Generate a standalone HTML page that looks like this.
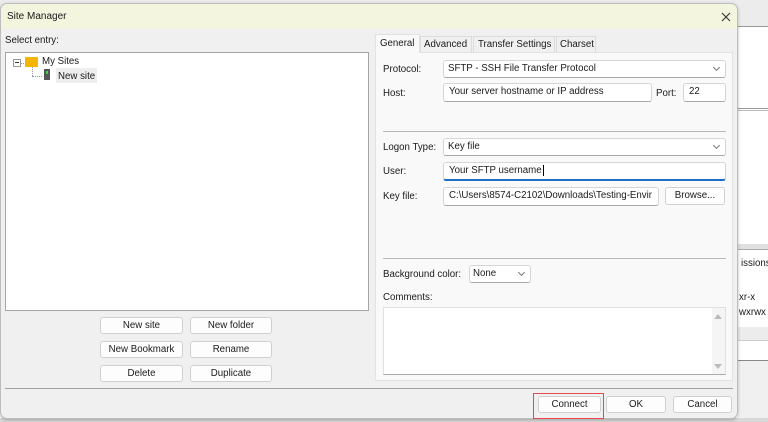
<!DOCTYPE html>
<html><head><meta charset="utf-8"><style>
*{box-sizing:border-box;margin:0;padding:0}
body{width:768px;height:422px;overflow:hidden;position:relative;background:#fff;font-family:"Liberation Sans",sans-serif;font-size:9.7px;color:#1a1a1a}
.a{position:absolute}
.btn{position:absolute;background:#fdfdfd;border:1px solid #d0d0d0;border-radius:3px;text-align:center;line-height:15px;font-size:9.7px}
.inp{position:absolute;background:#fff;border:1px solid #d6d6d6;border-bottom-color:#a8a8a8;border-radius:3px;padding-left:5px;line-height:16px;white-space:nowrap;overflow:hidden}
.sel::after{content:"";position:absolute;right:6px;top:4px;width:4px;height:4px;border-right:1px solid #777;border-bottom:1px solid #777;transform:rotate(45deg)}
.lbl{position:absolute;font-size:9.7px}
</style></head><body>
<div class="a" style="left:0;top:0;width:768px;height:26px;background:#ececec"></div>
<div class="a" style="left:738px;top:26px;width:30px;height:1px;background:#999"></div>
<div class="a" style="left:738px;top:108px;width:30px;height:3px;border-top:1px solid #999;border-bottom:1px solid #bbb"></div>
<div class="a" style="left:738px;top:244px;width:30px;height:6px;background:#e0e0e0;border-bottom:1px solid #aaa"></div>
<div class="a" style="left:741px;top:258px;font-size:9.7px">issions</div>
<div class="a" style="left:739px;top:292px;font-size:9.7px">xr-x</div>
<div class="a" style="left:739px;top:307px;font-size:9.7px">wxrwx</div>
<div class="a" style="left:738px;top:327px;width:30px;height:14px;background:#ececec;border-bottom:1px solid #ccc"></div>
<div class="a" style="left:738px;top:360px;width:30px;height:1px;background:#888"></div>
<div class="a" style="left:738px;top:361px;width:30px;height:61px;background:#f0f0f0"></div>
<div class="a" style="left:0;top:418px;width:768px;height:4px;background:#d8d8d8"></div>
<div class="a" style="left:0;top:3px;width:738px;height:416px;background:#f0f0f0;border:1px solid #bdbdbd;border-radius:7px;overflow:hidden;box-shadow:0 1px 3px rgba(0,0,0,.25)">
 <div class="a" style="left:0;top:0;width:738px;height:25px;background:#f3f5df"></div>
 <div class="a" style="left:6px;top:7px;font-size:10px">Site Manager</div>
 <svg class="a" style="left:720px;top:8px" width="10" height="10"><path d="M1 1L9 9M9 1L1 9" stroke="#333" stroke-width="1.1"/></svg>
</div>
<div class="lbl" style="left:5px;top:35px">Select entry:</div>
<div class="a" style="left:5px;top:52px;width:364px;height:259px;background:#fff;border:1px solid #a5a5a5"></div>
<div class="a" style="left:13px;top:59px;width:8px;height:8px;border:1px solid #999;background:#fff"></div>
<div class="a" style="left:15px;top:62px;width:4px;height:1px;background:#333"></div>
<div class="a" style="left:21px;top:63px;width:5px;border-top:1px dotted #999"></div>
<div class="a" style="left:25px;top:57px;width:13px;height:10px;background:#f5b400;border-radius:1px"></div>
<div class="a" style="left:42px;top:56px">My Sites</div>
<div class="a" style="left:32px;top:67px;height:9px;border-left:1px dotted #999"></div>
<div class="a" style="left:32px;top:76px;width:10px;border-top:1px dotted #999"></div>
<div class="a" style="left:44px;top:69px;width:6px;height:11px;background:#555"></div>
<div class="a" style="left:46px;top:71px;width:2px;height:3px;background:#4c4"></div>
<div class="a" style="left:56px;top:68px;width:41px;height:15px;background:#eee"></div>
<div class="a" style="left:58px;top:71px">New site</div>
<div class="btn" style="left:100px;top:317px;width:83px;height:17px">New site</div>
<div class="btn" style="left:190px;top:317px;width:82px;height:17px">New folder</div>
<div class="btn" style="left:100px;top:341px;width:83px;height:17px">New Bookmark</div>
<div class="btn" style="left:190px;top:341px;width:82px;height:17px">Rename</div>
<div class="btn" style="left:100px;top:365px;width:83px;height:17px">Delete</div>
<div class="btn" style="left:190px;top:365px;width:82px;height:17px">Duplicate</div>
<div class="a" style="left:375px;top:52px;width:358px;height:329px;background:#f9f9f9;border:1px solid #e2e2e2"></div>
<div class="a" style="left:375px;top:34px;width:45px;height:19px;background:#f9f9f9;border:1px solid #e2e2e2;border-bottom:none"></div>
<div class="a" style="left:380px;top:38px">General</div>
<div class="a" style="left:420px;top:36px;width:52px;height:16px;border:1px solid #dcdcdc;border-bottom:none;background:#f0f0f0"></div>
<div class="a" style="left:424px;top:39px">Advanced</div>
<div class="a" style="left:473px;top:36px;width:82px;height:16px;border:1px solid #dcdcdc;border-bottom:none"></div>
<div class="a" style="left:478px;top:39px">Transfer Settings</div>
<div class="a" style="left:556px;top:36px;width:40px;height:16px;border:1px solid #dcdcdc;border-bottom:none"></div>
<div class="a" style="left:560px;top:39px">Charset</div>
<div class="lbl" style="left:383px;top:64px">Protocol:</div>
<div class="inp sel" style="left:443px;top:60px;width:283px;height:18px;padding-left:4px">SFTP - SSH File Transfer Protocol</div>
<div class="lbl" style="left:383px;top:88px">Host:</div>
<div class="inp" style="left:443px;top:83px;width:209px;height:19px">Your server hostname or IP address</div>
<div class="lbl" style="left:656px;top:88px">Port:</div>
<div class="inp" style="left:683px;top:83px;width:43px;height:19px">22</div>
<div class="a" style="left:383px;top:131px;width:343px;height:1px;background:#b8b8b8"></div>
<div class="lbl" style="left:383px;top:142px">Logon Type:</div>
<div class="inp sel" style="left:443px;top:138px;width:283px;height:18px;padding-left:4px">Key file</div>
<div class="lbl" style="left:383px;top:166px">User:</div>
<div class="inp" style="left:443px;top:162px;width:283px;height:19px;border-bottom:2px solid #1a6fc4">Your SFTP username<span style="border-left:1px solid #000;margin-left:1px"></span></div>
<div class="lbl" style="left:383px;top:191px">Key file:</div>
<div class="inp" style="left:443px;top:187px;width:216px;height:19px">C:\Users\8574-C2102\Downloads\Testing-Envir</div>
<div class="btn" style="left:665px;top:187px;width:60px;height:18px;line-height:16px">Browse...</div>
<div class="a" style="left:383px;top:258px;width:343px;height:1px;background:#b8b8b8"></div>
<div class="lbl" style="left:383px;top:269px">Background color:</div>
<div class="inp sel" style="left:469px;top:265px;width:62px;height:18px;padding-left:3px">None</div>
<div class="lbl" style="left:383px;top:292px">Comments:</div>
<div class="a" style="left:383px;top:307px;width:343px;height:68px;background:#fff;border:1px solid #e0e0e0;border-bottom-color:#aaa"></div>
<div class="a" style="left:712px;top:308px;width:13px;height:66px;background:#f5f5f5"></div>
<div class="a" style="left:714px;top:314px;border:4px solid transparent;border-bottom:5px solid #bbb;border-top:none"></div>
<div class="a" style="left:714px;top:364px;border:4px solid transparent;border-top:5px solid #bbb;border-bottom:none"></div>
<div class="a" style="left:5px;top:388px;width:728px;height:1px;background:#a0a0a0"></div>
<div class="a" style="left:533px;top:393px;width:71px;height:26px;border:1px solid #e5484d"></div>
<div class="btn" style="left:538px;top:396px;width:63px;height:17px">Connect</div>
<div class="btn" style="left:606px;top:396px;width:60px;height:17px">OK</div>
<div class="btn" style="left:673px;top:396px;width:59px;height:17px">Cancel</div>
</body></html>
